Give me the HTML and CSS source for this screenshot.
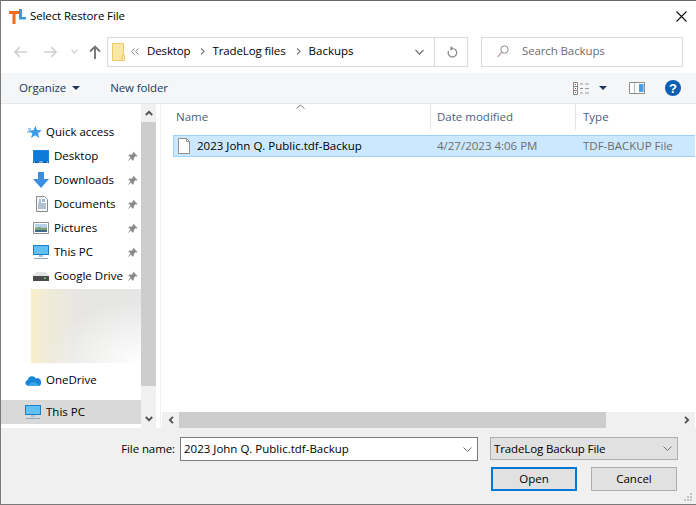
FILE: index.html
```html
<!DOCTYPE html>
<html lang="en">
<head>
<meta charset="utf-8">
<title>Select Restore File</title>
<link rel="stylesheet" href="styles.css">
</head>
<body>
<div class="window">
  <header class="titlebar">
    <svg class="app-icon" width="17" height="16" viewBox="0 0 17 16"><path d="M0 2h10v3H6.500v10H3.500V5H0z" fill="#f26a1b"/><path d="M10 0h3v8h4v2.500h-7z" fill="#3d97e0"/></svg>
    <span class="title txt">Select Restore File</span>
    <svg class="close" width="11" height="11" viewBox="0 0 11 11"><path d="M.5.500l10 10M10.500.500l-10 10" stroke="#111" stroke-width="1.100" fill="none"/></svg>
  </header>

  <nav class="navbar">
    <svg class="nav-back" width="13" height="12" viewBox="0 0 13 12"><path d="M6 1L1 6l5 5M1 6h12" stroke="#cfcfcf" stroke-width="1.600" fill="none"/></svg>
    <svg class="nav-forward" width="13" height="12" viewBox="0 0 13 12"><path d="M7 1l5 5-5 5M12 6H0" stroke="#cfcfcf" stroke-width="1.600" fill="none"/></svg>
    <svg class="nav-drop" width="7" height="5" viewBox="0 0 7 5"><path d="M.5 1l3 3 3-3" stroke="#cfcfcf" stroke-width="1.200" fill="none"/></svg>
    <svg class="nav-up" width="12" height="14" viewBox="0 0 12 14"><path d="M1 6.500l5-5 5 5M6 1.500V14" stroke="#757575" stroke-width="1.900" fill="none"/></svg>
    <div class="address">
      <svg class="folder" width="13" height="18" viewBox="0 0 13 18"><path d="M.5.500h11v17H.5z" fill="#fbe8a6" stroke="#eac768"/><path d="M10 12h2.500v5.500H10z" fill="#fbe8a6" stroke="#eac768"/></svg>
      <svg class="crumb-more" width="8" height="7" viewBox="0 0 8 7"><path d="M3.500.500l-3 3 3 3M7.500.500l-3 3 3 3" stroke="#8a8a8a" fill="none"/></svg>
      <span class="crumb c1 txt">Desktop</span>
      <svg class="crumb-sep sep1" width="5" height="7" viewBox="0 0 5 7"><path d="M1 .500l3 3-3 3" stroke="#808080" stroke-width="1.300" fill="none"/></svg>
      <span class="crumb txt">TradeLog files</span>
      <svg class="crumb-sep sep2" width="5" height="7" viewBox="0 0 5 7"><path d="M1 .500l3 3-3 3" stroke="#808080" stroke-width="1.300" fill="none"/></svg>
      <span class="crumb txt-plain">Backups</span>
      <span class="spacer"></span>
      <svg class="addr-drop" width="9" height="6" viewBox="0 0 9 6"><path d="M.5 1l4 4 4-4" stroke="#777" stroke-width="1.300" fill="none"/></svg>
      <span class="addr-divider"></span>
      <svg class="refresh" width="11" height="12" viewBox="0 0 11 12"><path d="M5.500 2.500a4.200 4.200 0 1 1-4.200 4.300" stroke="#8a8a8a" stroke-width="1.400" fill="none" transform="rotate(25 5.500 6.500)"/><path d="M3.500 0l3.500 2.500-3.500 2.500z" fill="#8a8a8a"/></svg>
    </div>
    <div class="search">
      <svg class="search-icon" width="12" height="13" viewBox="0 0 12 13"><circle cx="7.500" cy="4.500" r="3.700" stroke="#8c8c8c" fill="none"/><path d="M4.800 7.200L.7 12" stroke="#b58a94" fill="none" stroke-width="1.100"/></svg>
      <span class="txt">Search Backups</span>
    </div>
  </nav>

  <div class="toolbar">
    <span class="tool txt">Organize</span>
    <span class="tri-down"></span>
    <span class="tool newfolder txt">New folder</span>
    <span class="spacer"></span>
    <svg class="views" width="17" height="13" viewBox="0 0 17 13"><path d="M.5.500h4v12h-4z" fill="#fff" stroke="#8a8a8a"/><path d="M.5 4.500h4M.5 8.500h4" stroke="#8a8a8a"/><path d="M2 2h1v1H2zM2 6h1v1H2zM2 10h1v1H2z" fill="#b5533c"/><path d="M7 2h3M12 2h4M7 6.500h3M12 6.500h4M7 11h3M12 11h4" stroke="#9a9a9a"/></svg>
    <span class="tri-down views-tri"></span>
    <svg class="pane" width="16" height="12" viewBox="0 0 16 12"><path d="M.5.500h15v11H.5z" fill="#fff" stroke="#8a8a8a"/><path d="M10 2h4.500v8H10z" fill="#4a9be8"/><path d="M5.500 1v10" stroke="#b5b5b5"/></svg>
    <svg class="help" width="16" height="16" viewBox="0 0 16 16"><circle cx="8" cy="8" r="8" fill="#0a5fb4"/><text x="8" y="12.500" text-anchor="middle" class="help-q">?</text></svg>
  </div>

  <main class="main">
    <aside class="sidebar">
      <ul class="tree">
        <li class="node top">
          <svg class="star" width="15" height="14" viewBox="0 0 15 14"><path d="M8.500 1l1.500 4 5 .3-4 3 1.300 4.700-4-2.700L4 13l1.300-4.500-4-3 5-.2z" fill="#3b9de8"/><path d="M4 4H1M3 7H0" stroke="#3b9de8"/></svg>
          <span class="label">Quick access</span>
        </li>
        <li class="node pinned">
          <svg width="16" height="13" viewBox="0 0 16 13"><path d="M0 0h16v13H0z" fill="#1f86e0"/><path d="M1 1h14v10H1z" fill="#0f7ad8"/><path d="M0 11.500h16v1.500H0z" fill="#0a5da8"/><path d="M1 12h1M14 12h1M6 12h4" stroke="#cfe8ff"/></svg>
          <span class="label">Desktop</span>
          <svg class="pin" width="11" height="11" viewBox="0 0 11 11"><path d="M6 .500l4.500 4.500-1.200.6-.8-.4-1.800 1.800.2 1.800-1 1-2-2L1 10l-.2-.2L3.500 6.500l-2-2 1-1 1.800.2 1.800-1.800-.4-.8z" fill="#8d8d8d"/></svg>
        </li>
        <li class="node pinned">
          <svg width="16" height="16" viewBox="0 0 16 16"><path d="M5 0h6v7h5l-8 9-8-9h5z" fill="#3a8fe0"/></svg>
          <span class="label">Downloads</span>
          <svg class="pin" width="11" height="11" viewBox="0 0 11 11"><path d="M6 .500l4.500 4.500-1.200.6-.8-.4-1.800 1.800.2 1.800-1 1-2-2L1 10l-.2-.2L3.500 6.500l-2-2 1-1 1.800.2 1.800-1.800-.4-.8z" fill="#8d8d8d"/></svg>
        </li>
        <li class="node pinned">
          <svg class="doc-icon" width="12" height="16" viewBox="0 0 12 16"><path d="M.5.500h8l3 3v12H.5z" fill="#f7f7f7" stroke="#8a8a8a"/><path d="M3 4h2M3 6h2" stroke="#3c8ad0"/><path d="M2 8h8M2 10h8M2 12h8" stroke="#6a8aa5"/><path d="M6 3h3v3H6z" fill="#9fb9cf"/></svg>
          <span class="label">Documents</span>
          <svg class="pin" width="11" height="11" viewBox="0 0 11 11"><path d="M6 .500l4.500 4.500-1.200.6-.8-.4-1.800 1.800.2 1.800-1 1-2-2L1 10l-.2-.2L3.500 6.500l-2-2 1-1 1.800.2 1.800-1.800-.4-.8z" fill="#8d8d8d"/></svg>
        </li>
        <li class="node pinned">
          <svg width="16" height="12" viewBox="0 0 16 12"><path d="M.5.500h15v11H.5z" fill="#fff" stroke="#909090"/><path d="M2 2h12v4H2z" fill="#b6d2ea"/><path d="M2 6l4-1 4 1 4-.5V8H2z" fill="#7f9f74"/><path d="M2 8h12v2H2z" fill="#3c6a8c"/></svg>
          <span class="label">Pictures</span>
          <svg class="pin" width="11" height="11" viewBox="0 0 11 11"><path d="M6 .500l4.500 4.500-1.200.6-.8-.4-1.800 1.800.2 1.800-1 1-2-2L1 10l-.2-.2L3.500 6.500l-2-2 1-1 1.800.2 1.800-1.800-.4-.8z" fill="#8d8d8d"/></svg>
        </li>
        <li class="node pinned">
          <svg width="16" height="14" viewBox="0 0 16 14"><path d="M0 0h16v10H0z" fill="#1d7fc4"/><path d="M1 1h14v8H1z" fill="#5fc0f5"/><path d="M6 10h4v2H6z" fill="#a9c4d8"/><path d="M1 13h14v1H1z" fill="#8fa9bd"/></svg>
          <span class="label">This PC</span>
          <svg class="pin" width="11" height="11" viewBox="0 0 11 11"><path d="M6 .500l4.500 4.500-1.200.6-.8-.4-1.800 1.800.2 1.800-1 1-2-2L1 10l-.2-.2L3.500 6.500l-2-2 1-1 1.800.2 1.800-1.800-.4-.8z" fill="#8d8d8d"/></svg>
        </li>
        <li class="node pinned">
          <svg width="16" height="9" viewBox="0 0 16 9"><path d="M3 0h10l3 4H0z" fill="#e4e4e4"/><path d="M0 4h16v5H0z" fill="#4a4a4a"/><path d="M11 5.500h2V7h-2z" fill="#5fd35f"/></svg>
          <span class="label">Google Drive</span>
          <svg class="pin" width="11" height="11" viewBox="0 0 11 11"><path d="M6 .500l4.500 4.500-1.200.6-.8-.4-1.800 1.800.2 1.800-1 1-2-2L1 10l-.2-.2L3.500 6.500l-2-2 1-1 1.800.2 1.800-1.800-.4-.8z" fill="#8d8d8d"/></svg>
        </li>
      </ul>
      <div class="redacted"></div>
      <div class="node top onedrive">
        <svg width="16" height="11" viewBox="0 0 16 11"><path d="M3 10.800a3 3 0 0 1-.3-5.900A4.500 4.500 0 0 1 11 3.400a3.600 3.600 0 0 1 5 3.400 4 4 0 0 1-1.500 4z" fill="#1a86d8"/><path d="M3 10.800c1-2 4-4 7-3.500l4.500 3.500z" fill="#39a9ec"/></svg>
        <span class="label">OneDrive</span>
      </div>
      <div class="node top selected">
        <svg width="16" height="14" viewBox="0 0 16 14"><path d="M0 0h16v10H0z" fill="#1d7fc4"/><path d="M1 1h14v8H1z" fill="#5fc0f5"/><path d="M6 10h4v2H6z" fill="#a9c4d8"/><path d="M1 13h14v1H1z" fill="#8fa9bd"/></svg>
        <span class="label">This PC</span>
      </div>
    </aside>

    <div class="vscroll">
      <span class="sb-btn"><svg width="8" height="6" viewBox="0 0 8 6"><path d="M.8 5l3.200-3.200L7.200 5" stroke="#505050" stroke-width="1.800" fill="none"/></svg></span>
      <span class="sb-thumb"></span>
      <span class="sb-track"></span>
      <span class="sb-btn"><svg width="8" height="6" viewBox="0 0 8 6"><path d="M.8 1l3.200 3.200L7.200 1" stroke="#505050" stroke-width="1.800" fill="none"/></svg></span>
    </div>

    <section class="files">
      <svg class="sort" width="9" height="5" viewBox="0 0 9 5"><path d="M.5 4.500l4-3.500 4 3.500" stroke="#7a7a7a" fill="none"/></svg>
      <div class="cols head">
        <span class="col"><span class="txt-plain">Name</span></span>
        <span class="col"><span class="txt-plain">Date modified</span></span>
        <span class="col col-type"><span class="txt-plain">Type</span></span>
      </div>
      <div class="cols row">
        <span class="cell cell-name">
          <svg width="12" height="16" viewBox="0 0 12 16"><path d="M.5.500h8l3 3v12H.5z" fill="#fff" stroke="#8f8f8f"/><path d="M8.500.500v3h3" fill="none" stroke="#8f8f8f"/></svg>
          <span class="txt-plain">2023 John Q. Public.tdf-Backup</span>
        </span>
        <span class="cell cell-info"><span class="txt-plain">4/27/2023 4:06 PM</span></span>
        <span class="cell cell-info cell-type"><span class="txt-plain">TDF-BACKUP File</span></span>
      </div>
      <span class="spacer"></span>
      <div class="hscroll">
        <span class="hb-btn"><svg width="6" height="8" viewBox="0 0 6 8"><path d="M5 .800L1.800 4 5 7.200" stroke="#505050" stroke-width="1.800" fill="none"/></svg></span>
        <span class="hb-thumb"></span>
        <span class="hb-track"></span>
        <span class="hb-btn"><svg width="6" height="8" viewBox="0 0 6 8"><path d="M1 .800L4.200 4 1 7.200" stroke="#505050" stroke-width="1.800" fill="none"/></svg></span>
      </div>
    </section>
  </main>

  <footer class="footer">
    <div class="footer-row first">
      <label class="fname-label"><span class="txt-plain">File name:</span></label>
      <div class="fname">
        <span class="txt-plain">2023 John Q. Public.tdf-Backup</span>
        <svg width="9" height="5" viewBox="0 0 9 5"><path d="M.5.500l4 4 4-4" stroke="#707070" fill="none"/></svg>
      </div>
      <div class="filter">
        <span class="filter-text">TradeLog Backup File</span>
        <svg width="9" height="5" viewBox="0 0 9 5"><path d="M.5.500l4 4 4-4" stroke="#707070" fill="none"/></svg>
      </div>
    </div>
    <div class="footer-row second">
      <button class="btn primary">Open</button>
      <button class="btn">Cancel</button>
    </div>
    <svg class="grip" width="9" height="9" viewBox="0 0 9 9"><path d="M6 0h2v2H6zM3 3h2v2H3zM6 3h2v2H6zM0 6h2v2H0zM3 6h2v2H3zM6 6h2v2H6z" fill="#c4c4c4"/></svg>
  </footer>
</div>
</body>
</html>
```

FILE: styles.css
```css
* { box-sizing: border-box; }
html, body { margin: 0; padding: 0; background: #fff; }
body { font-family: "Open Sans", "Liberation Sans", sans-serif; font-size: 11.5px; color: #000; overflow: hidden; }
ul { list-style: none; margin: 0; padding: 0; }
svg { display: block; flex: none; }
.spacer { flex: 1; }

/* Text sits one pixel above the centre line, as in the reference. */
.txt, .txt-plain, .label { margin-bottom: 2px; white-space: nowrap; }
.txt, .filter-text { letter-spacing: -0.12px; }

.window { width: 696px; height: 505px; border-top: 1px solid #6a6a6a; border-left: 1px solid #7a7a7a; border-bottom: 1px solid #7a7a7a; display: flex; flex-direction: column; background: #fff; }

.titlebar { height: 29px; flex: none; display: flex; align-items: center; padding: 1px 9px 0 8px; }
.title { margin-left: 4px; }
.close { margin-left: auto; }
.app-icon { margin-top: 2px; }

.navbar { height: 43px; flex: none; display: flex; align-items: center; padding-left: 13px; }
.nav-forward { margin-left: 17px; }
.nav-drop { margin-left: 14px; }
.nav-up { margin-left: 11px; }
.address { margin-left: 6px; width: 361px; height: 30px; border: 1px solid #d9d9d9; display: flex; align-items: center; padding-left: 4px; }
.crumb-more { margin-left: 6px; }
.c1 { margin-left: 8px; }
.sep1 { margin: 0 8px 0 9px; }
.sep2 { margin: 0 8px 0 10px; }
.addr-drop { margin-right: 10px; }
.addr-divider { width: 1px; align-self: stretch; background: #d9d9d9; }
.refresh { margin: 0 9px 0 12px; }
.search { margin-left: 13px; width: 202px; height: 30px; border: 1px solid #d9d9d9; display: flex; align-items: center; padding-left: 15px; color: #6d6d6d; }
.search .txt { margin-left: 13px; }

.toolbar { height: 30px; flex: none; background: #f5f6f7; display: flex; align-items: center; padding: 0 15px 0 18px; color: #1e395b; }
.tri-down { width: 0; height: 0; border-left: 4px solid transparent; border-right: 4px solid transparent; border-top: 4px solid #1e395b; margin-left: 6px; }
.newfolder { margin-left: 30px; }
.views-tri { margin: 0 22px 0 9px; }
.pane { margin-right: 20px; }
.help-q { font-family: "Liberation Sans", sans-serif; font-size: 13px; font-weight: 700; fill: #fff; }

.main { flex: 1; min-height: 0; display: flex; border-top: 1px solid #e8e8e8; }
.sidebar { width: 140px; flex: none; padding-top: 16px; }
.node { height: 24px; display: grid; align-items: center; }
.node.top { padding-left: 24px; grid-template-columns: 21px 1fr; }
.node.pinned { padding-left: 32px; grid-template-columns: 21px 73px 11px; }
.star { margin-left: 2px; }
.doc-icon { margin-left: 3px; }
.redacted { height: 74px; margin: 1px 0 5px 30px; background: radial-gradient(ellipse at 100% 100%, #fff 0, rgba(255,255,255,0) 60%), linear-gradient(90deg, #f8eecd 0, #f0ebd8 15%, #e7e6e2 40%, #e6e6e6 100%); }
.onedrive { margin-bottom: 8px; }
.selected { background: #d9d9d9; }

.vscroll { width: 15px; flex: none; display: flex; flex-direction: column; background: #f0f0f0; }
.sb-btn { height: 18px; flex: none; display: flex; align-items: center; justify-content: center; }
.sb-thumb { height: 264px; flex: none; background: #cdcdcd; }
.sb-track { flex: 1; }

.files { flex: 1; min-width: 0; margin-left: 4px; border-left: 1px solid #f0f0f0; display: flex; flex-direction: column; position: relative; }
.sort { position: absolute; left: 135px; top: 0; }
.cols { display: grid; }
.head { height: 26px; padding-left: 12px; color: #4c607a; grid-template-columns: 258px 145px 1fr; }
.col { display: flex; align-items: center; padding-left: 6px; border-right: 1px solid #e5e5e5; }
.col:first-child { padding-left: 3px; }
.col-type { border-right: 0; padding-left: 7px; }
.row { height: 22px; margin: 5px 1px 0 12px; background: #cce8ff; border: 1px solid #99d1ff; border-right: 0; color: #6d6d6d; align-items: center; grid-template-columns: 257px 145px 1fr; }
.cell { display: flex; align-items: center; }
.cell-name { color: #000; padding-left: 4px; gap: 7px; }
.cell-info { padding-left: 6px; }
.cell-type { padding-left: 7px; }
.hscroll { height: 16px; flex: none; margin: 0 1px; display: flex; background: #f0f0f0; }
.hb-btn { width: 17px; flex: none; display: flex; align-items: center; justify-content: center; }
.hb-thumb { width: 427px; flex: none; background: #cdcdcd; }
.hb-track { flex: 1; }

.footer { height: 76px; flex: none; background: #f0f0f0; position: relative; padding-top: 9px; }
.footer-row { display: flex; }
.first { align-items: center; }
.fname-label { width: 174px; display: flex; justify-content: flex-end; letter-spacing: -0.1px; }
.fname { margin-left: 5px; width: 298px; height: 24px; background: #fff; border: 1px solid #7a7a7a; display: flex; align-items: center; justify-content: space-between; padding: 0 5px 0 3px; }
.filter { margin-left: 12px; width: 188px; height: 23px; background: #e1e1e1; border: 1px solid #adadad; display: flex; align-items: center; justify-content: space-between; padding: 0 5px 0 3px; margin-top: -1px; }
.second { padding: 6px 0 0 490px; gap: 14px; }
.btn { width: 86px; height: 24px; padding: 0 0 2px; background: #e1e1e1; border: 1px solid #adadad; font: inherit; color: #000; }
.primary { border: 2px solid #0078d7; }
.grip { position: absolute; right: 3px; bottom: 2px; }
```
